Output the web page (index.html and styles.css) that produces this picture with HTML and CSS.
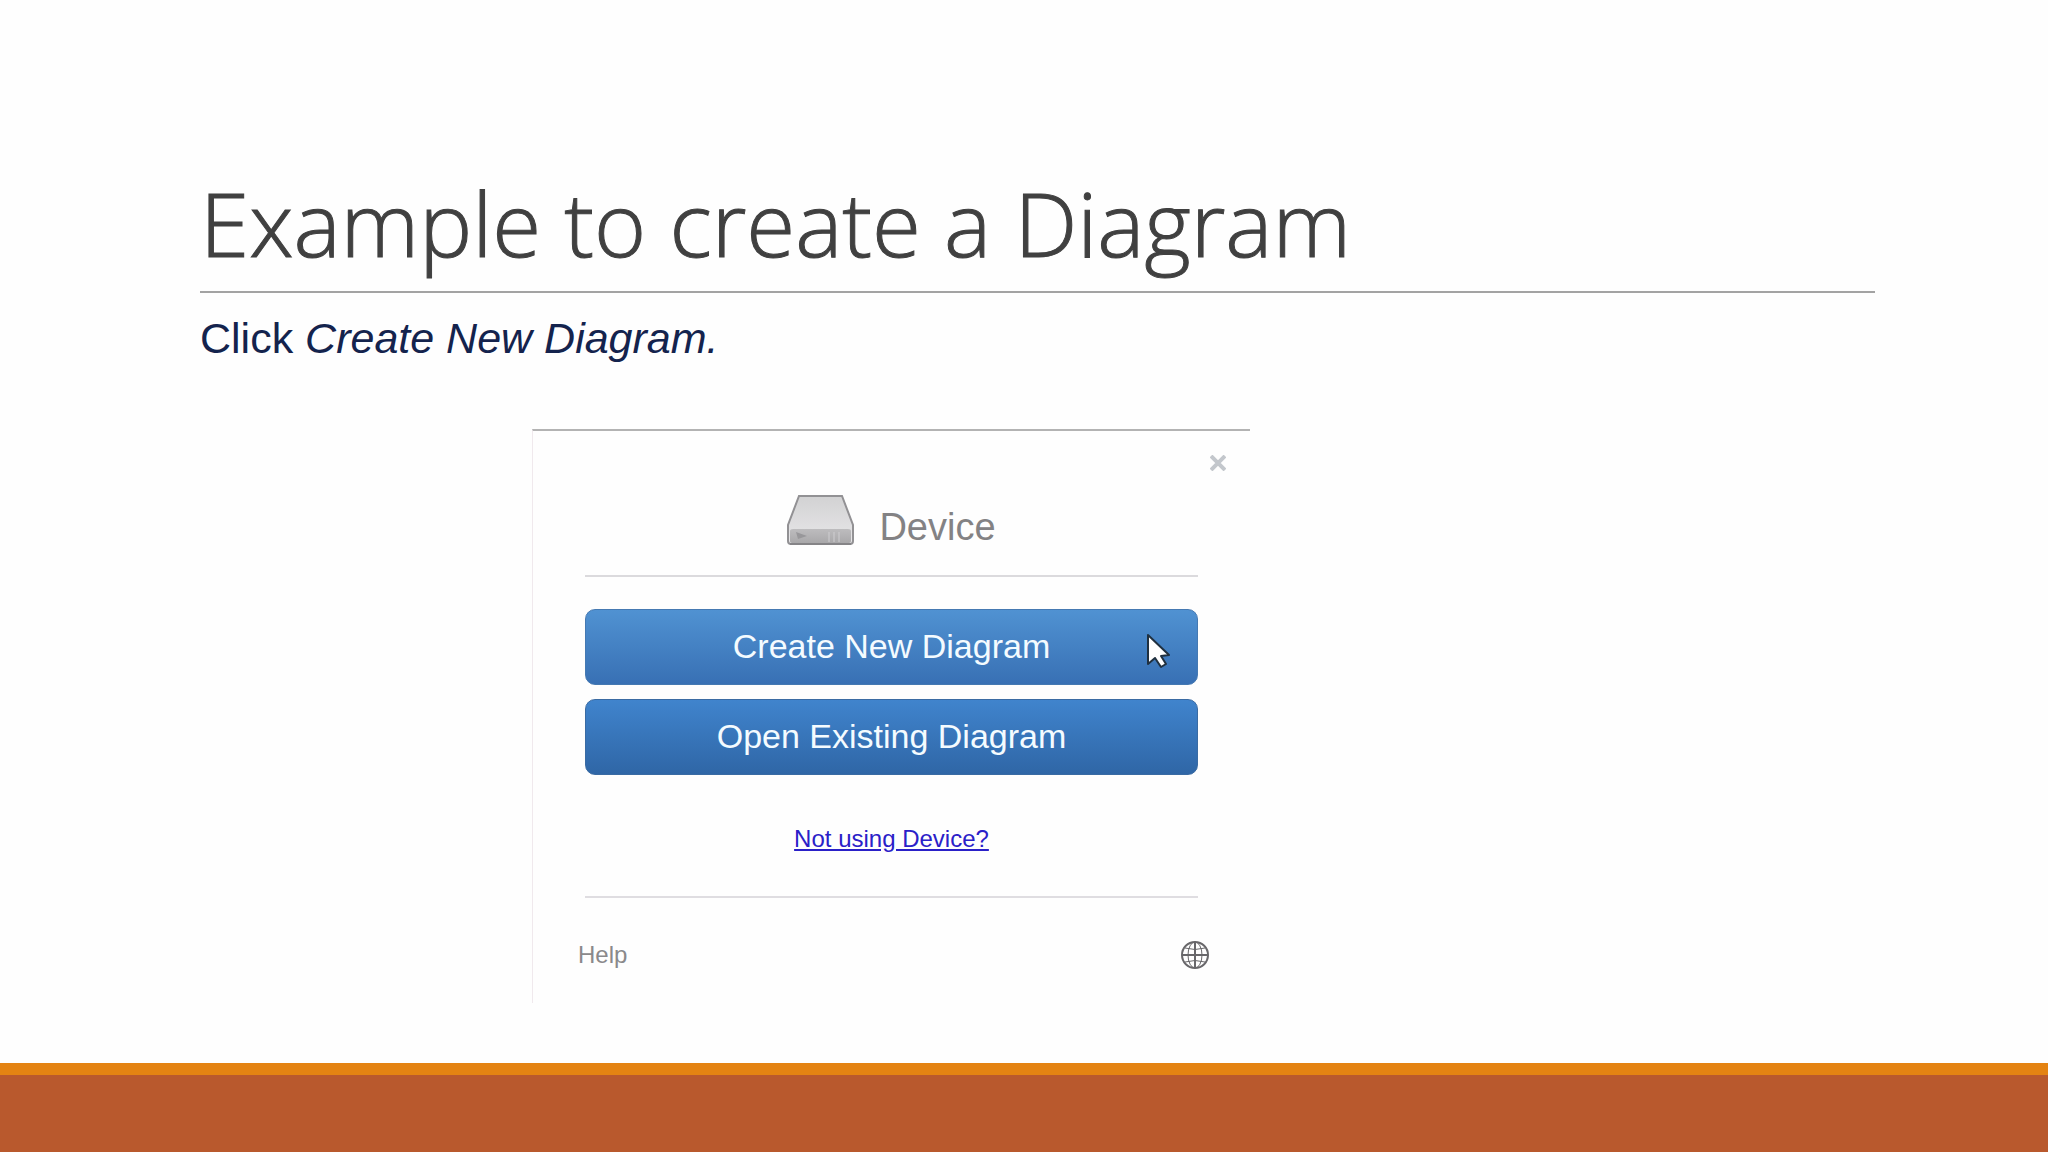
FILE: index.html
```html
<!DOCTYPE html>
<html lang="en">
<head>
<meta charset="utf-8">
<meta name="viewport" content="width=device-width, initial-scale=1">
<title>Example to create a Diagram</title>
<link rel="stylesheet" href="styles.css">
</head>
<body>
<main class="slide">
  <h1 class="title">Example to create a Diagram</h1>
  <p class="step">Click <em>Create New Diagram.</em></p>
  <section class="dialog" aria-label="Device">
    <div class="dialog-top">
      <button class="close" type="button" aria-label="Close">
        <svg width="16" height="16" viewBox="0 0 16 16"><path d="M1 1l14 14M15 1L1 15" stroke="#c3c7cc" stroke-width="4"/></svg>
      </button>
    </div>
    <div class="dialog-body">
      <header class="device">
        <svg class="drive" width="68" height="54" viewBox="0 0 68 54" aria-hidden="true">
          <defs>
            <linearGradient id="lid" x1="0" y1="0" x2="0" y2="1"><stop offset="0" stop-color="#d2d2d3"/><stop offset="1" stop-color="#e8e7e9"/></linearGradient>
            <linearGradient id="front" x1="0" y1="0" x2="0" y2="1"><stop offset="0" stop-color="#bdbcbe"/><stop offset="1" stop-color="#a9a8aa"/></linearGradient>
          </defs>
          <path d="M12 2H55L66 31V47Q66 50 63 50H4Q1 50 1 47V31Z" fill="url(#lid)" stroke="#929194" stroke-width="2"/>
          <path d="M3 37Q3 35 6 35H61Q64 35 64 37V47Q64 49 61 49H6Q3 49 3 47Z" fill="url(#front)"/>
          <path d="M9 38l11 4-9 3z" fill="#98979a"/>
          <path d="M42 38v10M47 38v10M52 38v10" stroke="#cfced1" stroke-width="1"/>
          <path d="M3 50H64" stroke="#858487" stroke-width="2"/>
        </svg>
        <h2 class="device-name">Device</h2>
      </header>
      <div class="actions">
        <button class="action action-hover" type="button">Create New Diagram
          <svg class="cursor" width="26" height="38" viewBox="0 0 26 38" aria-hidden="true"><path d="M2 2V31L9 25L15 34L20 31L15 23L23 22Z" fill="#fff" stroke="#20303f" stroke-width="2" stroke-linejoin="round"/></svg>
        </button>
        <button class="action" type="button">Open Existing Diagram</button>
      </div>
      <a class="switch" href="#">Not using Device?</a>
    </div>
    <footer class="dialog-footer">
      <a class="help" href="#">Help</a>
      <button class="language" type="button" aria-label="Language">
        <svg width="30" height="30" viewBox="0 0 30 30" fill="none" stroke="#68676a" stroke-width="2"><circle cx="15" cy="15" r="13"/><ellipse cx="15" cy="15" rx="7" ry="13" stroke-width="1"/><path d="M15 2V28M2 15H28"/><path d="M5 8Q15 11 25 8M5 22Q15 19 25 22" stroke-width="1"/></svg>
      </button>
    </footer>
  </section>
</main>
<div class="band"></div>
</body>
</html>
```
FILE: styles.css
```css
* { box-sizing: border-box; }
body {
  margin: 0;
  min-height: 100vh;
  display: flex;
  flex-direction: column;
  background: #fefefe;
  font-family: "Liberation Sans", Arial, sans-serif;
}
.slide { flex: 1; padding: 157px 173px 40px 200px; }
.title {
  margin: 0;
  padding-bottom: 2px;
  border-bottom: 2px solid #a3a3a3;
  color: #404040;
  font: 300 89px/132px "Open Sans", sans-serif;
  -webkit-text-stroke: 1px #404040;
}
.step { margin: 0; padding-top: 22px; color: #14234d; font-size: 43px; line-height: 46px; }
.dialog {
  width: 100%;
  max-width: 718px;
  min-height: 574px;
  margin: 68px 0 0 332px;
  border-top: 2px solid #b3b3b3;
  border-left: 1px solid #f0e9ed;
}
.dialog-top { display: flex; justify-content: flex-end; padding: 24px 24px 0; }
.close, .language { display: block; padding: 0; border: 0; background: none; cursor: pointer; }
.close svg, .language svg { display: block; }
.dialog-body { margin: 0 52px; padding-bottom: 43px; border-bottom: 2px solid #dfdde1; text-align: center; }
.device {
  display: flex;
  justify-content: center;
  align-items: center;
  gap: 24px;
  height: 106px;
  padding-bottom: 4px;
  border-bottom: 2px solid #dbdadd;
}
.device-name { margin: 0; padding-top: 12px; color: #838284; font-size: 38px; font-weight: 400; line-height: 44px; }
.actions { display: grid; gap: 14px; padding: 32px 0 50px; }
.action {
  position: relative;
  height: 76px;
  padding: 0 0 2px;
  border: 1px solid #3a6ba3;
  border-radius: 10px;
  background: linear-gradient(#4084cd, #2f66a6);
  color: #f4fbff;
  font: 34px/40px "Liberation Sans", Arial, sans-serif;
}
.action-hover { border-color: #4579b2; background: linear-gradient(#5092d2, #3870b4); }
.cursor { position: absolute; right: 25px; top: 23px; }
.switch { color: #2a20c8; font-size: 24px; line-height: 28px; text-underline-offset: 2px; }
.dialog-footer { display: flex; justify-content: space-between; align-items: center; padding: 42px 40px 0 45px; }
.help { color: #8a898b; font-size: 24px; line-height: 28px; text-decoration: none; }
.band { height: 89px; border-top: 12px solid #e48312; background: #b9592d; }
```
